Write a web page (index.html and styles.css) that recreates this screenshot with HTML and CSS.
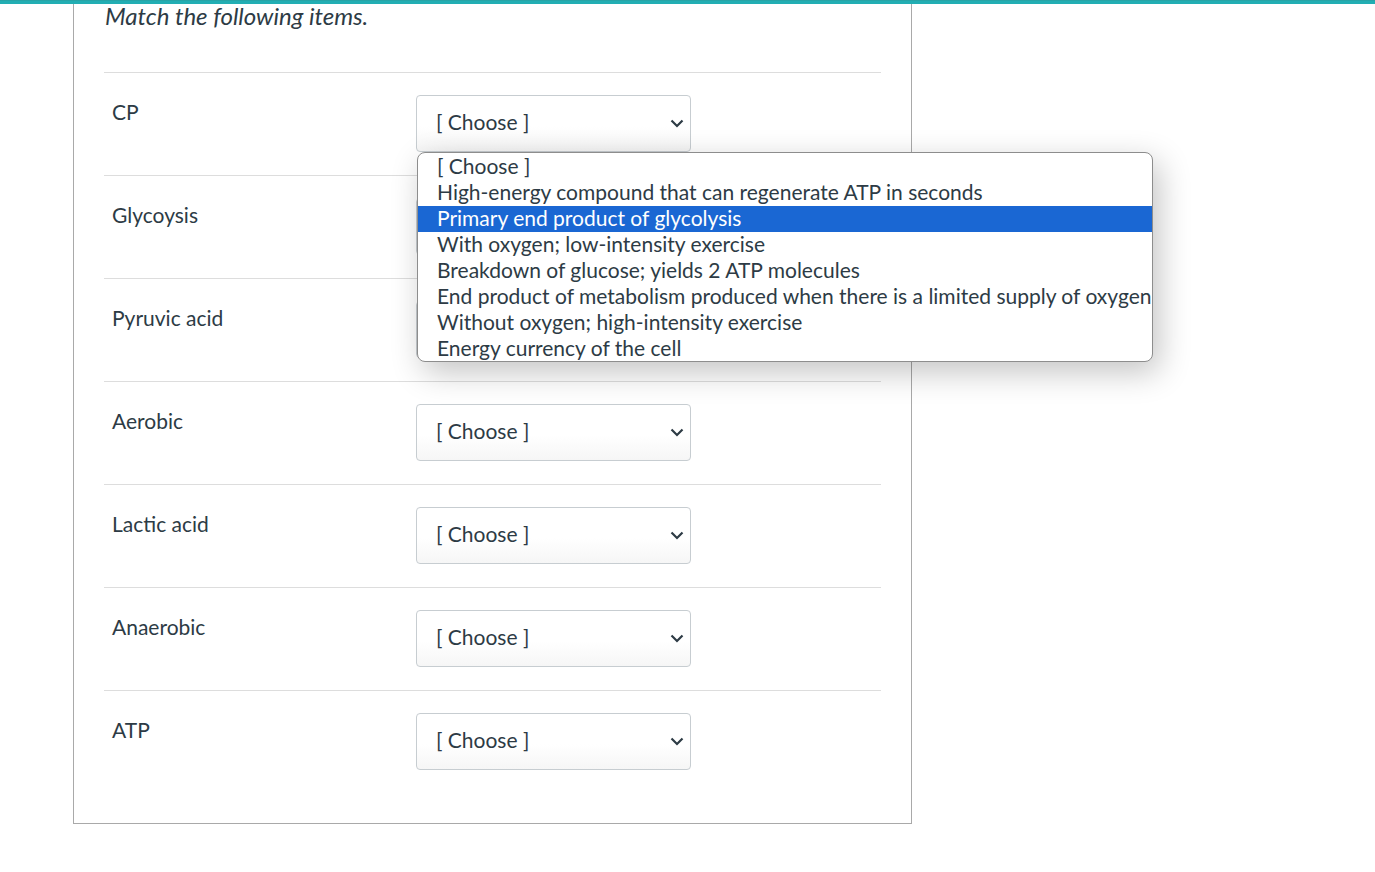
FILE: index.html
```html
<!DOCTYPE html>
<html>
<head>
<meta charset="utf-8">
<link rel="stylesheet" href="styles.css">
</head>
<body>
<div class="topbar"></div>
<div class="card">
  <div class="title">Match the following items.</div>
  <div class="rows">
    <div class="row">
      <div class="label">CP</div>
      <div class="select-wrap">
        <div class="select"><span>[ Choose ]</span><svg class="chev" width="14" height="9" viewBox="0 0 14 9"><path d="M1.5 1.5 L7 7 L12.5 1.5" fill="none" stroke="#2d3b45" stroke-width="2.2"/></svg></div>
        <div class="dropdown">
          <div class="opt">[ Choose ]</div>
          <div class="opt">High-energy compound that can regenerate ATP in seconds</div>
          <div class="opt sel">Primary end product of glycolysis</div>
          <div class="opt">With oxygen; low-intensity exercise</div>
          <div class="opt">Breakdown of glucose; yields 2 ATP molecules</div>
          <div class="opt">End product of metabolism produced when there is a limited supply of oxygen</div>
          <div class="opt">Without oxygen; high-intensity exercise</div>
          <div class="opt last">Energy currency of the cell</div>
        </div>
      </div>
    </div>
    <div class="row">
      <div class="label">Glycoysis</div>
      <div class="select-wrap"><div class="select covered"><span>[ Choose ]</span><svg class="chev" width="14" height="9" viewBox="0 0 14 9"><path d="M1.5 1.5 L7 7 L12.5 1.5" fill="none" stroke="#2d3b45" stroke-width="2.2"/></svg></div></div>
    </div>
    <div class="row">
      <div class="label">Pyruvic acid</div>
      <div class="select-wrap"><div class="select covered"><span>[ Choose ]</span><svg class="chev" width="14" height="9" viewBox="0 0 14 9"><path d="M1.5 1.5 L7 7 L12.5 1.5" fill="none" stroke="#2d3b45" stroke-width="2.2"/></svg></div></div>
    </div>
    <div class="row">
      <div class="label">Aerobic</div>
      <div class="select-wrap"><div class="select"><span>[ Choose ]</span><svg class="chev" width="14" height="9" viewBox="0 0 14 9"><path d="M1.5 1.5 L7 7 L12.5 1.5" fill="none" stroke="#2d3b45" stroke-width="2.2"/></svg></div></div>
    </div>
    <div class="row">
      <div class="label">Lactic acid</div>
      <div class="select-wrap"><div class="select"><span>[ Choose ]</span><svg class="chev" width="14" height="9" viewBox="0 0 14 9"><path d="M1.5 1.5 L7 7 L12.5 1.5" fill="none" stroke="#2d3b45" stroke-width="2.2"/></svg></div></div>
    </div>
    <div class="row">
      <div class="label">Anaerobic</div>
      <div class="select-wrap"><div class="select"><span>[ Choose ]</span><svg class="chev" width="14" height="9" viewBox="0 0 14 9"><path d="M1.5 1.5 L7 7 L12.5 1.5" fill="none" stroke="#2d3b45" stroke-width="2.2"/></svg></div></div>
    </div>
    <div class="row">
      <div class="label">ATP</div>
      <div class="select-wrap"><div class="select"><span>[ Choose ]</span><svg class="chev" width="14" height="9" viewBox="0 0 14 9"><path d="M1.5 1.5 L7 7 L12.5 1.5" fill="none" stroke="#2d3b45" stroke-width="2.2"/></svg></div></div>
    </div>
  </div>
</div>
</body>
</html>
```
FILE: styles.css
```css
html, body {
  margin: 0;
  padding: 0;
  background: #fff;
  font-family: Lato, "Noto Sans", sans-serif;
  color: #2d3b45;
}
.topbar {
  height: 4px;
  background: #22aeb3;
  border-top: 1px solid #27a3a6;
  box-sizing: border-box;
}
.card {
  margin-left: 73px;
  width: 839px;
  box-sizing: border-box;
  border: 1px solid #a9a9a9;
  border-top: none;
  padding: 0 30px 30px 30px;
}
.title {
  font-style: italic;
  font-size: 24px;
  line-height: 24px;
  padding-left: 1px;
  height: 68px;
}
.row {
  display: flex;
  align-items: flex-start;
  border-top: 1px solid #dddddd;
  padding: 22px 0 23px 0;
}
.label {
  width: 304px;
  padding-left: 8px;
  padding-top: 4px;
  font-size: 21px;
  line-height: 25px;
}
.select-wrap {
  position: relative;
}
.select {
  width: 275px;
  height: 57px;
  box-sizing: border-box;
  border: 1px solid #c7cdd1;
  border-radius: 4px;
  display: flex;
  align-items: center;
  justify-content: space-between;
  padding: 0 6px 4px 19px;
  font-size: 21px;
  background: linear-gradient(#ffffff 55%, #f6f6f6);
}
.select.covered span {
  visibility: hidden;
}
.chev {
  display: block;
  margin-top: 4px;
}
.dropdown {
  position: absolute;
  left: 1px;
  top: 57px;
  width: 736px;
  box-sizing: border-box;
  border: 1px solid #8d8d8d;
  border-radius: 8px;
  background: #fff;
  box-shadow: 6px 10px 32px rgba(0,0,0,0.24);
  z-index: 10;
  overflow: hidden;
  padding-top: 1px;
}
.opt {
  height: 26px;
  line-height: 24px;
  font-size: 21px;
  padding-left: 19px;
  white-space: nowrap;
  color: #2d3b45;
}
.opt.last {
  height: 25px;
}
.opt.sel {
  background: #1a67d3;
  color: #fff;
}
```
